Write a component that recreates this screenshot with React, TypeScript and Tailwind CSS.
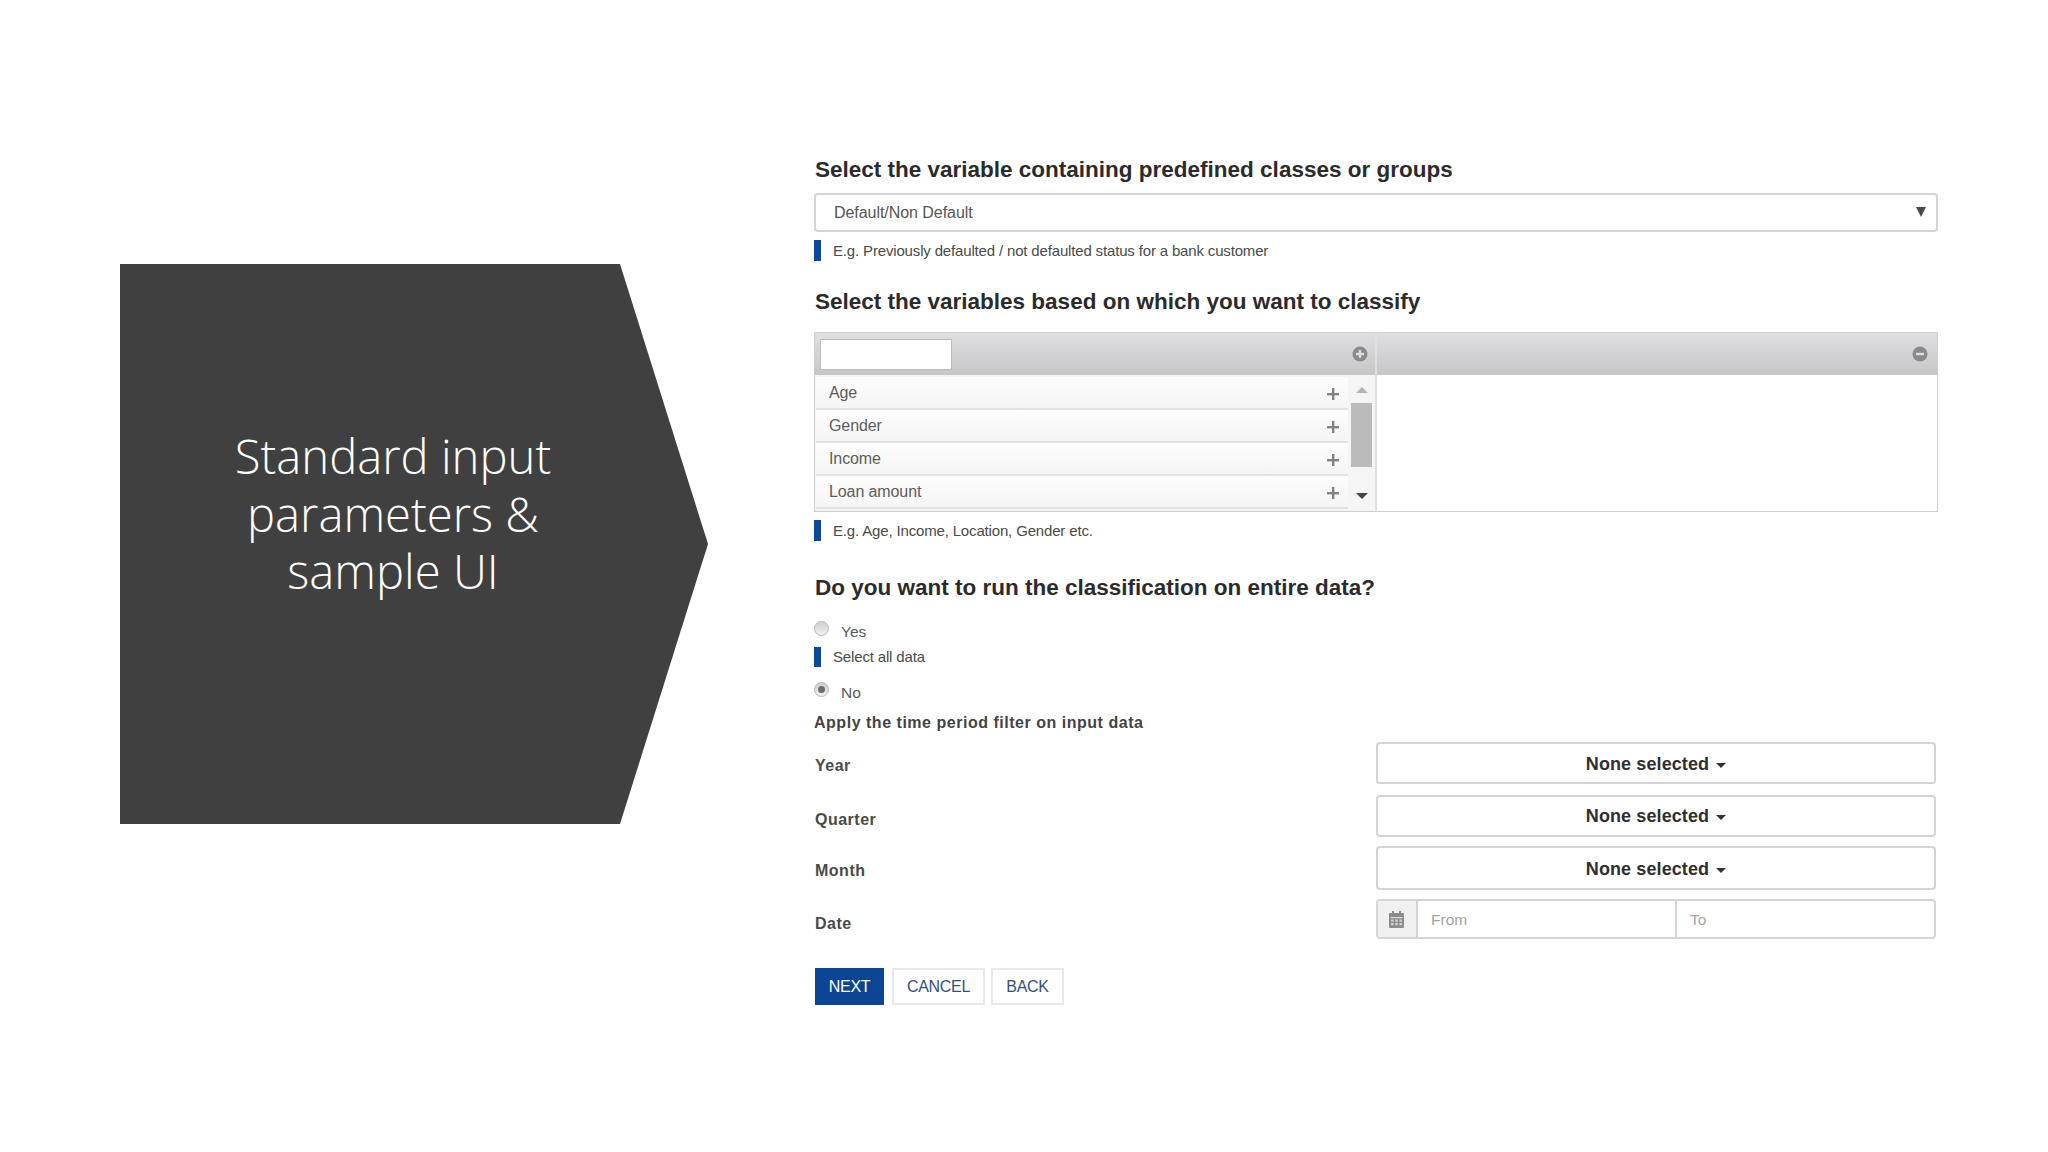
import React from "react";

const arial = "font-['Liberation_Sans',Arial,sans-serif]";

function Help({ text, cls = "" }: { text: string; cls?: string }) {
  return (
    <div className={`flex items-center h-[21px] -ml-[1px] ${cls}`}>
      <div className="w-[7px] h-full bg-[#0a4a9c]" />
      <span className="ml-[12px] mt-[1px] text-[15px] tracking-[-0.16px] text-[#4a4a4a]">{text}</span>
    </div>
  );
}

function Heading({ text, cls = "" }: { text: string; cls?: string }) {
  return (
    <div className={`h-[26px] leading-[26px] font-bold text-[22.5px] text-[#2b2b2b] whitespace-nowrap ${cls}`}>
      {text}
    </div>
  );
}

function CircleIcon({ minus }: { minus?: boolean }) {
  return (
    <svg width="16" height="16" viewBox="0 0 16 16" className="block">
      <circle cx="8" cy="8" r="7.5" fill="#8a8a8a" />
      <rect x="4" y="6.8" width="8" height="2.4" fill="#dedede" />
      {!minus && <rect x="6.8" y="4" width="2.4" height="8" fill="#dedede" />}
    </svg>
  );
}

function ListRow({ label }: { label: string }) {
  return (
    <div className="h-[33px] flex items-center justify-between pl-[13px] pr-[9px] border-b-2 border-[#e2e2e2] bg-gradient-to-b from-[#fdfdfd] to-[#f5f5f5]">
      <span className="text-[16px] tracking-[-0.1px] text-[#5c5c5c]">{label}</span>
      <svg width="12" height="12" viewBox="0 0 12 12" className="mt-[2px]">
        <rect x="5" y="0" width="2.4" height="12" fill="#828282" />
        <rect x="0" y="5" width="12" height="2.4" fill="#828282" />
      </svg>
    </div>
  );
}

function Radio({ label, checked, cls = "" }: { label: string; checked?: boolean; cls?: string }) {
  return (
    <div className={`flex h-[24px] -ml-[1px] ${cls}`}>
      <div className="w-[15px] h-[15px] rounded-full border border-[#b5b5b5] bg-gradient-to-b from-[#cfcfcf] to-[#f0f0f0] flex items-center justify-center mt-[3px]">
        {checked && <div className="w-[7px] h-[7px] rounded-full bg-[#6d6d6d]" />}
      </div>
      <span className="ml-[12px] mt-[5px] text-[15.5px] leading-[18px] text-[#5a5a5a]">{label}</span>
    </div>
  );
}

function Dropdown({ h, shift = "" }: { h: string; shift?: string }) {
  return (
    <div className={`w-[560px] ${h} border-2 border-[#d4d4d8] rounded-[4px] flex items-center justify-center`}>
      <span className={`text-[18px] font-bold tracking-[0.1px] text-[#2f2f2f] ${shift}`}>None selected</span>
      <span className={`ml-[7px] mt-[2px] w-0 h-0 border-x-[5px] border-x-transparent border-t-[5px] border-t-[#333333] ${shift}`} />
    </div>
  );
}

function FieldRow({ label, h, cls = "", shift = "", labelCls = "mt-[7px]" }: { label: string; h: string; cls?: string; shift?: string; labelCls?: string }) {
  return (
    <div className={`flex items-center justify-between w-[1121px] ${cls}`}>
      <span className={`text-[16px] font-bold tracking-[0.5px] text-[#4a4a4a] ${labelCls}`}>{label}</span>
      <Dropdown h={h} shift={shift} />
    </div>
  );
}

export default function App() {
  return (
    <div className={`w-[2048px] h-[1152px] bg-white flex ${arial} overflow-hidden`}>
      <div className="ml-[120px] mt-[264px] w-[588px] h-[560px] bg-[#404040] [clip-path:polygon(0_0,500px_0,100%_50%,500px_100%,0_100%)] pt-[164px] pr-[42px] shrink-0">
        <div className="font-['Open_Sans',sans-serif] font-light text-[47.2px] leading-[57.6px] text-white text-center">
          Standard input
          <br />
          parameters &amp;
          <br />
          sample UI
        </div>
      </div>

      <div className="ml-[107px] w-[1123px] pt-[157px] flex flex-col">
        <Heading text="Select the variable containing predefined classes or groups" />

        <div className="mt-[10px] -ml-[1px] h-[39px] border-2 border-[#d4d4d8] rounded-[4px] flex items-center justify-between pl-[18px] pr-[10px]">
          <span className="mt-[1px] text-[16px] tracking-[-0.05px] text-[#555555]">Default/Non Default</span>
          <span className="w-0 h-0 border-x-[5px] border-x-transparent border-t-[10px] border-t-[#4a4a4a] -translate-y-[1px]" />
        </div>

        <Help cls="mt-[8px]" text="E.g. Previously defaulted / not defaulted status for a bank customer" />

        <Heading cls="mt-[28px]" text="Select the variables based on which you want to classify" />

        <div className="mt-[17px] -ml-[1px] h-[180px] border border-[#cfcfd2] flex">
          <div className="w-[562px] flex flex-col border-r-2 border-[#e0e0e3]">
            <div className="h-[42px] bg-gradient-to-b from-[#dedfe0] to-[#c6c6c8] flex items-center justify-between pl-[5px] pr-[7px] shrink-0">
              <div className="w-[132px] h-[31px] bg-white border border-[#bdbdbd]" />
              <CircleIcon />
            </div>
            <div className="flex flex-1 min-h-0 overflow-hidden bg-[#f5f5f6]">
              <div className="w-[533px] pt-[2px] pl-[1px]">
                <ListRow label="Age" />
                <ListRow label="Gender" />
                <ListRow label="Income" />
                <ListRow label="Loan amount" />
              </div>
              <div className="w-[21px] ml-[3px] flex flex-col items-center">
                <span className="mt-[12px] w-0 h-0 border-x-[6px] border-x-transparent border-b-[6px] border-b-[#b4b4b4]" />
                <div className="mt-[10px] w-full h-[64px] bg-[#bbbbbb]" />
                <span className="mt-[26px] w-0 h-0 border-x-[6px] border-x-transparent border-t-[6px] border-t-[#444444]" />
              </div>
            </div>
          </div>
          <div className="flex-1 flex flex-col">
            <div className="h-[42px] bg-gradient-to-b from-[#dedfe0] to-[#c6c6c8] flex items-center justify-end pr-[9px]">
              <CircleIcon minus />
            </div>
          </div>
        </div>

        <Help cls="mt-[8px]" text="E.g. Age, Income, Location, Gender etc." />

        <Heading cls="mt-[34px]" text="Do you want to run the classification on entire data?" />

        <Radio cls="mt-[17px]" label="Yes" />
        <Help cls="mt-[5px] !h-[20px]" text="Select all data" />
        <Radio cls="mt-[12px]" label="No" checked />

        <div className="mt-[10px] h-[20px] leading-[20px] -ml-[1px] text-[16px] font-bold tracking-[0.52px] text-[#444444]">
          Apply the time period filter on input data
        </div>

        <FieldRow cls="mt-[9px]" label="Year" h="h-[42px]" shift="translate-y-[1px]" labelCls="mt-[6px]" />
        <FieldRow cls="mt-[11px]" label="Quarter" h="h-[42px]" />
        <FieldRow cls="mt-[9px]" label="Month" h="h-[44px]" shift="translate-y-[1px]" labelCls="mt-[5px]" />

        <div className="mt-[9px] flex items-center justify-between w-[1121px]">
          <span className="text-[16px] font-bold tracking-[0.5px] text-[#4a4a4a] mt-[9px]">Date</span>
          <div className="w-[560px] h-[40px] border-2 border-[#d4d4d8] rounded-[4px] flex">
            <div className="w-[40px] bg-[#f0f0f1] border-r-2 border-[#d4d4d8] flex items-center justify-center rounded-l-[3px]">
              <svg width="15" height="17" viewBox="0 0 15 17" className="-ml-[2px]">
                <rect x="3" y="0" width="2" height="3" fill="#8c8c8c" />
                <rect x="10" y="0" width="2" height="3" fill="#8c8c8c" />
                <rect x="0" y="2" width="15" height="15" rx="1" fill="#8c8c8c" />
                <rect x="1.5" y="6" width="12" height="1.2" fill="#dcdcdc" />
                <rect x="2" y="8.5" width="2.6" height="2.2" fill="#d0d0d0" />
                <rect x="6.2" y="8.5" width="2.6" height="2.2" fill="#d0d0d0" />
                <rect x="10.4" y="8.5" width="2.6" height="2.2" fill="#d0d0d0" />
                <rect x="2" y="12" width="2.6" height="2.2" fill="#d0d0d0" />
                <rect x="6.2" y="12" width="2.6" height="2.2" fill="#d0d0d0" />
                <rect x="10.4" y="12" width="2.6" height="2.2" fill="#d0d0d0" />
              </svg>
            </div>
            <div className="w-[259px] border-r-2 border-[#d4d4d8] pl-[13px] pt-[1px] flex items-center text-[15.5px] text-[#a3a3a3]">From</div>
            <div className="flex-1 pl-[13px] pt-[1px] flex items-center text-[15.5px] text-[#a3a3a3]">To</div>
          </div>
        </div>

        <div className="mt-[29px] flex h-[37px] text-[16px] tracking-[-0.3px]">
          <div className="w-[69px] pt-[1px] bg-[#0a4594] text-white flex items-center justify-center">NEXT</div>
          <div className="ml-[8px] w-[93px] pt-[1px] border-2 border-[#e8e8ea] text-[#33507c] flex items-center justify-center">CANCEL</div>
          <div className="ml-[6px] w-[73px] pt-[1px] border-2 border-[#e8e8ea] text-[#33507c] flex items-center justify-center">BACK</div>
        </div>
      </div>
    </div>
  );
}
